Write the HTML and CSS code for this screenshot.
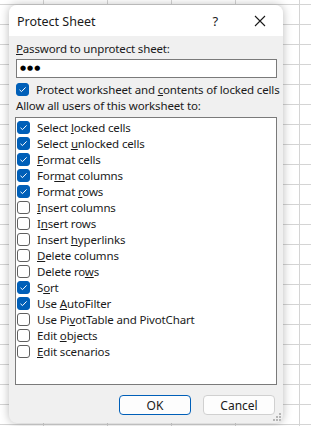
FILE: index.html
```html
<!DOCTYPE html>
<html lang="en">
<head>
    <meta charset="UTF-8">
    <title>Protect Sheet</title>
    <link rel="stylesheet" href="styles.css">
</head>
<body>
    <div class="dialog">
        <div class="titlebar">
            <span class="title">Protect Sheet</span>
            <span class="help">?</span>
            <svg class="close" width="12" height="12" viewBox="0 0 12 12"><path d="M1 1 L11 11 M11 1 L1 11" stroke="#1a1a1a" stroke-width="1.1" fill="none"/></svg>
        </div>
        <div class="content">
            <div class="label"><u>P</u>assword to unprotect sheet:</div>
            <div class="password">&#9679;&#9679;&#9679;</div>
            <div class="check-row">
                <span class="box checked"></span>
                <span>Protect worksheet and <u>c</u>ontents of locked cells</span>
            </div>
            <div class="label allow">Allow all users of this worksheet to:</div>
            <div class="list">
                <div class="item"><span class="box checked"></span><span>Select <u>l</u>ocked cells</span></div>
                <div class="item"><span class="box checked"></span><span>Select <u>u</u>nlocked cells</span></div>
                <div class="item"><span class="box checked"></span><span><u>F</u>ormat cells</span></div>
                <div class="item"><span class="box checked"></span><span>For<u>m</u>at columns</span></div>
                <div class="item"><span class="box checked"></span><span>Format <u>r</u>ows</span></div>
                <div class="item"><span class="box"></span><span><u>I</u>nsert columns</span></div>
                <div class="item"><span class="box"></span><span>I<u>n</u>sert rows</span></div>
                <div class="item"><span class="box"></span><span>Insert <u>h</u>yperlinks</span></div>
                <div class="item"><span class="box"></span><span><u>D</u>elete columns</span></div>
                <div class="item"><span class="box"></span><span>Delete ro<u>w</u>s</span></div>
                <div class="item"><span class="box checked"></span><span>S<u>o</u>rt</span></div>
                <div class="item"><span class="box checked"></span><span>Use <u>A</u>utoFilter</span></div>
                <div class="item"><span class="box"></span><span>Use Pi<u>v</u>otTable and PivotChart</span></div>
                <div class="item"><span class="box"></span><span>Edit <u>o</u>bjects</span></div>
                <div class="item"><span class="box"></span><span><u>E</u>dit scenarios</span></div>
            </div>
            <div class="buttons">
                <button class="btn primary">OK</button>
                <button class="btn">Cancel</button>
            </div>
        </div>
        <svg class="grip" width="10" height="10" viewBox="0 0 10 10">
            <rect x="7" y="1" width="2" height="2" fill="#b5b5b5"/>
            <rect x="4" y="4" width="2" height="2" fill="#b5b5b5"/>
            <rect x="7" y="4" width="2" height="2" fill="#b5b5b5"/>
            <rect x="1" y="7" width="2" height="2" fill="#b5b5b5"/>
            <rect x="4" y="7" width="2" height="2" fill="#b5b5b5"/>
            <rect x="7" y="7" width="2" height="2" fill="#b5b5b5"/>
        </svg>
    </div>
</body>
</html>
```

FILE: styles.css
```css
body {
    margin: 0;
    height: 426px;
    overflow: hidden;
    background-color: #ffffff;
    background-image:
        linear-gradient(to right, #d4d4d4 1px, transparent 1px),
        linear-gradient(to bottom, #d4d4d4 1px, transparent 1px);
    background-size: 64px 20px;
    background-position: 43px 4px;
    font-family: "Noto Sans", "Open Sans", sans-serif;
    font-size: 11.5px;
    letter-spacing: -0.15px;
    color: #1a1a1a;
}

.dialog {
    position: relative;
    width: 274px;
    height: 418px;
    margin: 5px 0 0 9px;
    background-color: #f0f0f0;
    border-radius: 8px;
    box-shadow: 0 0 10px rgba(0, 0, 0, 0.28);
    overflow: hidden;
    display: flex;
    flex-direction: column;
}

.titlebar {
    height: 31px;
    background-color: #ffffff;
    display: flex;
    align-items: center;
    padding-left: 8px;
    padding-top: 1px;
    box-sizing: border-box;
}

.title {
    flex: 1;
    font-size: 12.5px;
    letter-spacing: 0;
}

.help {
    font-size: 13px;
    margin-right: 36px;
}

.close {
    margin-right: 17px;
}

.content {
    padding: 5px 6px 0 7px;
    display: flex;
    flex-direction: column;
}

.label {
    line-height: 16px;
    margin-bottom: 2px;
}

.allow {
    margin-top: 1px;
    margin-bottom: 3px;
}

.password {
    height: 17px;
    background-color: #ffffff;
    border: 1px solid #7a7a7a;
    font-family: "DejaVu Sans", sans-serif;
    font-size: 7px;
    line-height: 17px;
    padding-left: 3px;
    letter-spacing: 1px;
    color: #000000;
}

.check-row {
    display: flex;
    align-items: center;
    height: 16px;
    margin-top: 3px;
    gap: 7px;
    white-space: nowrap;
}

.box {
    width: 11px;
    height: 11px;
    border: 1px solid #5f5f5f;
    border-radius: 3px;
    background-color: #ffffff;
    flex-shrink: 0;
    box-sizing: content-box;
}

.box.checked {
    background-color: #005fb8;
    border-color: #005fb8;
    background-image: url("data:image/svg+xml;utf8,<svg xmlns='http://www.w3.org/2000/svg' width='11' height='11' viewBox='0 0 11 11'><path d='M2.5 5.8 L4.5 7.6 L8.6 3.4' stroke='white' stroke-width='1' fill='none'/></svg>");
}

.list {
    height: 268px;
    box-sizing: border-box;
    margin-left: -1px;
    background-color: #ffffff;
    border: 1px solid #7a7a7a;
    padding-top: 1px;
}

.item {
    display: flex;
    align-items: center;
    height: 16px;
    padding-left: 1px;
    gap: 7px;
    white-space: nowrap;
}

.buttons {
    display: flex;
    justify-content: flex-end;
    gap: 12px;
    margin-top: 10px;
    padding-right: 2px;
}

.btn {
    width: 72px;
    height: 20px;
    background-color: #fdfdfd;
    border: 1px solid #d0d0d0;
    border-radius: 4px;
    font-family: "Noto Sans", "Open Sans", sans-serif;
    font-size: 12px;
    color: #1a1a1a;
    padding: 0;
}

.btn.primary {
    border-color: #005fb8;
}

.grip {
    position: absolute;
    right: 1px;
    bottom: 1px;
}
```
